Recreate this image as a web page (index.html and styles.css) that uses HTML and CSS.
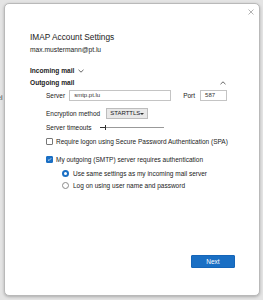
FILE: index.html
```html
<!DOCTYPE html>
<html>
<head>
<meta charset="utf-8">
<link rel="stylesheet" href="styles.css">
</head>
<body>
<div class="backdrop">
  <div class="behind"><span class="frag">ei</span></div>
  <div class="dialog">
    <div class="topbar">
      <svg class="close" width="6" height="6" viewBox="0 0 6 6"><path d="M0.5 0.5L5.5 5.5M5.5 0.5L0.5 5.5" stroke="#a0a0a0" stroke-width="0.8" fill="none"/></svg>
    </div>
    <div class="content">
      <h1 class="title">IMAP Account Settings</h1>
      <div class="email">max.mustermann@pt.lu</div>
      <div class="section-head">
        <span class="sec-label">Incoming mail</span>
        <svg class="chev" width="6" height="4" viewBox="0 0 6 4"><path d="M0.5 0.8L3 3.2L5.5 0.8" stroke="#555" stroke-width="0.9" fill="none"/></svg>
      </div>
      <div class="section-head out">
        <span class="sec-label">Outgoing mail</span>
        <svg class="chev up" width="6" height="4" viewBox="0 0 6 4"><path d="M0.5 3.2L3 0.8L5.5 3.2" stroke="#555" stroke-width="0.9" fill="none"/></svg>
      </div>
      <div class="section-body">
        <div class="row server-row">
          <span class="lbl">Server</span>
          <div class="input server-input">smtp.pt.lu</div>
          <span class="lbl port-lbl">Port</span>
          <div class="input port-input">587</div>
        </div>
        <div class="row enc-row">
          <span class="lbl">Encryption method</span>
          <div class="select"><span>STARTTLS</span><span class="caret"></span></div>
        </div>
        <div class="row to-row">
          <span class="lbl">Server timeouts</span>
          <div class="slider"><span class="fill"></span><span class="thumb"></span></div>
        </div>
        <div class="row check-row spa">
          <span class="check"></span>
          <span class="lbl">Require logon using Secure Password Authentication (SPA)</span>
        </div>
        <div class="row check-row smtp">
          <span class="check on"><svg width="7" height="7" viewBox="0 0 7 7"><path d="M1.3 3.6L2.8 5L5.8 1.8" stroke="#fff" stroke-width="1" fill="none"/></svg></span>
          <span class="lbl">My outgoing (SMTP) server requires authentication</span>
        </div>
        <div class="radios">
          <div class="row radio-row">
            <span class="radio on"></span>
            <span class="lbl">Use same settings as my incoming mail server</span>
          </div>
          <div class="row radio-row">
            <span class="radio"></span>
            <span class="lbl">Log on using user name and password</span>
          </div>
        </div>
      </div>
      <div class="spacer"></div>
      <div class="footer">
        <button class="next">Next</button>
      </div>
    </div>
  </div>
</div>
</body>
</html>
```

FILE: styles.css
```css
* { box-sizing: border-box; }
html, body { margin: 0; padding: 0; }
body {
  width: 263px;
  height: 300px;
  background: #e4e4e4;
  font-family: "Liberation Sans", Arial, sans-serif;
  color: #222;
  overflow: hidden;
}
.backdrop {
  display: flex;
  height: 300px;
  padding: 3px 3px 4px 0;
}
.behind {
  width: 4px;
  display: flex;
  align-items: flex-start;
  overflow: hidden;
  padding-top: 91px;
}
.frag {
  font-size: 7px;
  margin-left: -3px;
  color: #333;
}
.dialog {
  width: 256px;
  height: 293px;
  background: #fff;
  border: 1px solid #b9b9b9;
  border-radius: 5px;
  box-shadow: 0 1px 3px rgba(0,0,0,0.25);
  display: flex;
  flex-direction: column;
}
.topbar {
  display: flex;
  justify-content: flex-end;
  padding: 5px 5px 0 0;
  height: 14px;
}
.content {
  flex: 1;
  display: flex;
  flex-direction: column;
  padding: 0 0 0 25px;
}
.title {
  margin: 14px 0 0 0;
  font-size: 8.3px;
  font-weight: normal;
  line-height: 10px;
  color: #1a1a1a;
}
.email {
  margin-top: 3px;
  font-size: 6.7px;
  line-height: 9px;
}
.section-head {
  display: flex;
  align-items: center;
  margin-top: 12px;
  height: 9px;
}
.section-head.out {
  margin-top: 3px;
  width: 196px;
  justify-content: space-between;
}
.sec-label {
  font-size: 6.6px;
  font-weight: bold;
  line-height: 9px;
}
.chev { margin-left: 4px; }
.chev.up { margin-left: 0; }
.section-body {
  padding-left: 16px;
  display: flex;
  flex-direction: column;
}
.row {
  display: flex;
  align-items: center;
}
.lbl {
  font-size: 6.5px;
  line-height: 9px;
  white-space: nowrap;
}
.server-row { margin-top: 3px; height: 11px; }
.input {
  height: 11px;
  border: 1px solid #c4c4c4;
  font-size: 6px;
  line-height: 9px;
  padding-left: 4px;
  color: #333;
}
.server-input { width: 102px; margin-left: 4px; }
.port-lbl { margin-left: 12px; }
.port-input { width: 27px; margin-left: 5px; }
.enc-row { margin-top: 7px; height: 11px; }
.select {
  margin-left: 6px;
  width: 42px;
  height: 11px;
  background: #e8e8e8;
  border: 1px solid #bdbdbd;
  font-size: 6px;
  line-height: 9px;
  display: flex;
  align-items: center;
  justify-content: space-between;
  padding: 0 3px 0 3px;
}
.caret {
  width: 0; height: 0;
  border-left: 2px solid transparent;
  border-right: 2px solid transparent;
  border-top: 2.5px solid #333;
}
.to-row { margin-top: 3px; height: 11px; }
.slider {
  margin-left: 8px;
  width: 64px;
  height: 6px;
  display: flex;
  align-items: center;
  background: linear-gradient(#999, #999) center / 100% 1px no-repeat;
}
.fill {
  width: 5px;
  height: 1.5px;
  background: #333;
}
.thumb {
  width: 1.5px;
  height: 5px;
  background: #333;
}
.check-row { height: 9px; }
.spa { margin-top: 4px; }
.smtp { margin-top: 9px; }
.check {
  width: 7px;
  height: 7px;
  border: 1px solid #777;
  border-radius: 1px;
  margin-right: 3px;
  display: flex;
  align-items: center;
  justify-content: center;
}
.check.on {
  background: #1a6fc4;
  border-color: #1a6fc4;
}
.radios {
  padding-left: 16px;
  display: flex;
  flex-direction: column;
  gap: 3px;
  margin-top: 5px;
}
.radio-row { height: 9px; }
.radio {
  width: 7px;
  height: 7px;
  border: 1px solid #8a8a8a;
  border-radius: 50%;
  margin-right: 4px;
}
.radio.on {
  border: 2px solid #1a6fc4;
}
.spacer { flex: 1; }
.footer {
  display: flex;
  justify-content: flex-end;
  padding-right: 24px;
  margin-bottom: 27px;
}
.next {
  width: 44px;
  height: 13px;
  background: #1a6fc4;
  border: 1px solid #1565b8;
  color: #fff;
  font-family: "Liberation Sans", Arial, sans-serif;
  font-size: 6.5px;
  padding: 0;
  border-radius: 1px;
}
```
